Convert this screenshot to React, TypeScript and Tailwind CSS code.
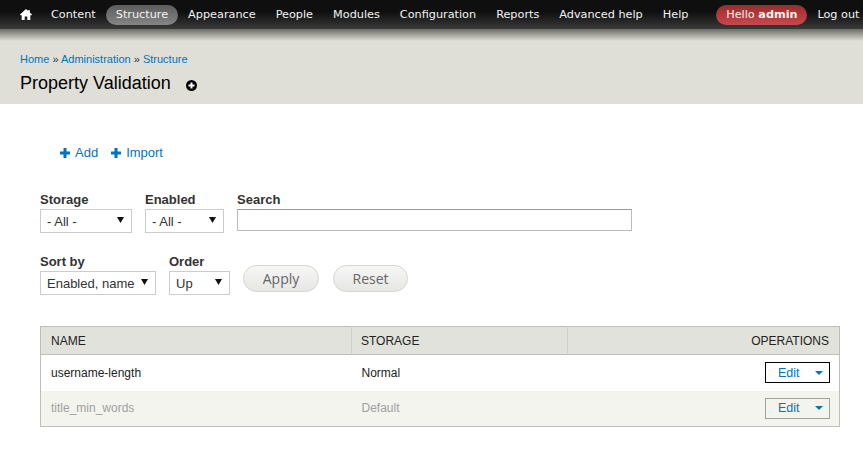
import React from 'react';

const navLinks = ['Content', 'Structure', 'Appearance', 'People', 'Modules', 'Configuration', 'Reports', 'Advanced help', 'Help'];

const FakeSelect = ({ label, value, width }: { label: string; value: string; width: string }) => (
  <div className="flex flex-col">
    <label className="text-[13px] leading-[16px] font-bold text-[#333] mb-[1px]">{label}</label>
    <div className={`${width} h-[24px] border border-[#ccc] bg-white flex items-center justify-between pl-[6px] pr-[7px] text-[13px] text-[#333]`}>
      <span className="mt-[1px]">{value}</span>
      <svg width="7" height="6" viewBox="0 0 7 6" className="mb-[2px]">
        <path d="M0 0h7L3.5 6z" fill="#111" />
      </svg>
    </div>
  </div>
);

const PlusIcon = () => (
  <svg width="10" height="10" viewBox="0 0 10 10">
    <path d="M3.5 0h3v3.5H10v3H6.500V10h-3V6.500H0v-3h3.500z" fill="#0074bd" />
  </svg>
);

const Row = ({ name, storage, disabled }: { name: string; storage: string; disabled?: boolean }) => (
  <tr className={disabled ? 'bg-[#f3f4ee] text-[#a0a0a0]' : 'bg-white text-[#222]'}>
    <td className="h-[36px] pl-[10px]">{name}</td>
    <td className="h-[36px] pl-[10px]">{storage}</td>
    <td className="h-[36px] pr-[9px]">
      <div className={`ml-auto w-[65px] h-[21px] border flex items-center justify-between pl-[12px] pr-[6px] text-[#0074bd] text-[12.5px] ${disabled ? 'border-[#a0a0a0]' : 'border-black'}`}>
        <span className="mt-[1px]">Edit</span>
        <svg width="8" height="4" viewBox="0 0 8 4"><path d="M0 0h8L4 4z" fill="#0074bd" /></svg>
      </div>
    </td>
  </tr>
);

export default function App() {
  return (
    <div className="w-[863px] h-[467px] overflow-hidden bg-white font-['Liberation_Sans',sans-serif]">
      {/* Toolbar */}
      <div className="h-[29px] pt-[1px] bg-gradient-to-b from-[#0f0f0f] from-40% to-[#3a3a3a] flex items-center pl-[20px] font-['DejaVu_Sans',sans-serif] text-[11.25px] text-[#f2f2f2] whitespace-nowrap">
        <svg width="12" height="11" viewBox="0 0 12 11" className="mr-[9px] mb-[1px]">
          <path d="M6 0l2.200 2V1h1.600v2.500L12 5.600l-.6.6H10.300V11H7.300V7.500H4.700V11H1.700V6.200H.6L0 5.600z" fill="#fff" />
        </svg>
        <div className="flex items-center">
          {navLinks.map((link) => (
            <span
              key={link}
              className={`px-[10px] h-[20px] leading-[20px] rounded-[10px] ${link === 'Structure' ? 'bg-gradient-to-b from-[#5c5c5c] to-[#858585]' : ''}`}
            >
              {link}
            </span>
          ))}
        </div>
        <span className="ml-[18px] w-[91px] h-[20px] leading-[20px] text-center rounded-[10px] bg-gradient-to-b from-[#9c2a2e] to-[#c9484b]">
          Hello <b>admin</b>
        </span>
        <span className="ml-[10px] leading-[20px]">Log out</span>
      </div>

      {/* Page header */}
      <div className="h-[75px] bg-[#dfdfd8] bg-gradient-to-b from-[#6e6e68] to-[#dfdfd8] to-[12px] bg-no-repeat pl-[20px] pt-[23px]">
        <div className="text-[11px] leading-[14px] text-[#333]">
          <span className="text-[#0074bd]">Home</span> » <span className="text-[#0074bd]">Administration</span> » <span className="text-[#0074bd]">Structure</span>
        </div>
        <div className="flex items-center mt-[4px]">
          <h1 className="text-[18px] leading-[27px] text-black">Property Validation</h1>
          <svg width="11" height="11" viewBox="0 0 11 11" className="ml-[15px] mt-[4px]">
            <circle cx="5.500" cy="5.500" r="5.500" fill="#000" />
            <path d="M4.500 2.500h2v2h2v2h-2v2h-2v-2h-2v-2h2z" fill="#fff" />
          </svg>
        </div>
      </div>

      {/* Content */}
      <div className="pl-[40px] text-[13px]">
        <div className="flex items-center gap-[13px] pl-[20px] pt-[41px] text-[#0074bd] text-[13px] leading-[15px]">
          <span className="flex items-center gap-[5px]"><PlusIcon />Add</span>
          <span className="flex items-center gap-[5px]"><PlusIcon />Import</span>
        </div>

        <div className="flex gap-[13px] mt-[32px]">
          <FakeSelect label="Storage" value="- All -" width="w-[92px]" />
          <FakeSelect label="Enabled" value="- All -" width="w-[79px]" />
          <div className="flex flex-col">
            <label className="text-[13px] leading-[16px] font-bold text-[#333] mb-[1px]">Search</label>
            <div className="w-[395px] h-[22px] border border-[#bbb] border-t-[#999] bg-white" />
          </div>
        </div>

        <div className="flex items-end gap-[13px] mt-[21px]">
          <FakeSelect label="Sort by" value="Enabled, name" width="w-[116px]" />
          <FakeSelect label="Order" value="Up" width="w-[61px]" />
          <div className="flex gap-[14px] mb-[3px]">
            <button className="w-[76px] h-[27px] rounded-[14px] border border-[#d4d4d0] bg-gradient-to-b from-[#f7f7f5] to-[#e6e6e3] text-[14px] text-[#666] font-['Open_Sans',sans-serif]">Apply</button>
            <button className="w-[75px] h-[27px] rounded-[14px] border border-[#d4d4d0] bg-gradient-to-b from-[#f7f7f5] to-[#e6e6e3] text-[14px] text-[#666] font-['Open_Sans',sans-serif]">Reset</button>
          </div>
        </div>

        <table className="mt-[31px] w-[800px] border border-[#bebfb9] border-collapse table-fixed text-[12px]">
          <thead>
            <tr className="bg-[#e1e2dc] text-[#222] h-[28px] border-b border-[#bebfb9]">
              <th className="w-[311px] text-left font-normal pl-[10px] border-r border-[#cfd0ca]">NAME</th>
              <th className="w-[216px] text-left font-normal pl-[9px] border-r border-[#cfd0ca]">STORAGE</th>
              <th className="text-right font-normal pr-[10px]">OPERATIONS</th>
            </tr>
          </thead>
          <tbody>
            <Row name="username-length" storage="Normal" />
            <Row name="title_min_words" storage="Default" disabled />
          </tbody>
        </table>
      </div>
    </div>
  );
}
